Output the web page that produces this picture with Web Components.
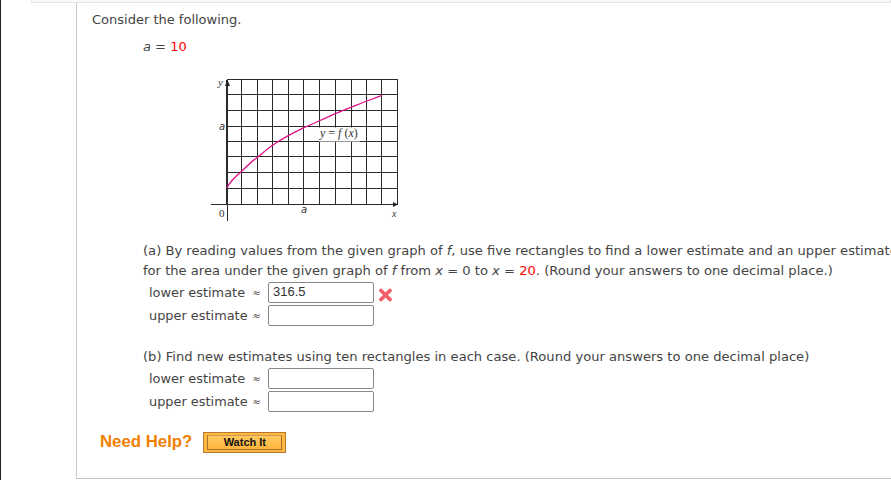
<!DOCTYPE html>
<html>
<head>
<meta charset="utf-8">
<title>Consider the following</title>
<style>
html, body { margin: 0; height: 480px; overflow: hidden; background: #fff; }
body { border-left: 1px solid #222; box-sizing: border-box; }
</style>
</head>
<body>
<question-panel>
  <problem-text>Consider the following.</problem-text>
  <given-value></given-value>
  <fn-graph></fn-graph>
  <part-block style="margin-top:20px">
    <span slot="text">(a) By reading values from the given graph of <i>f</i>, use five rectangles to find a lower estimate and an upper estimate<br>for the area under the given graph of <i>f</i> from <i>x</i> = 0 to <i>x</i> = <span style="color:#f00">20</span>. (Round your answers to one decimal place.)</span>
    <answer-row label="lower estimate" value="316.5" wrong></answer-row>
    <answer-row label="upper estimate"></answer-row>
  </part-block>
  <part-block style="margin-top:20px">
    <span slot="text">(b) Find new estimates using ten rectangles in each case. (Round your answers to one decimal place)</span>
    <answer-row label="lower estimate"></answer-row>
    <answer-row label="upper estimate"></answer-row>
  </part-block>
  <need-help></need-help>
</question-panel>

<script>
class QuestionPanel extends HTMLElement {
  constructor() {
    super();
    this.attachShadow({ mode: "open" });
    this.shadowRoot.innerHTML = `
<style>
:host { display: block; font: 13.1px/20px "DejaVu Sans", sans-serif; color: #444; }
.top { height: 3px; margin-left: 30px; background: #f8f8f8; border: 1px solid #e4e4e4; border-top: 0; box-sizing: border-box; }
.box {
  margin-left: 75px;
  height: 476px;
  box-sizing: border-box;
  border-left: 1px solid #ccc;
  border-bottom: 1px solid #c4c4c4;
  padding: 7px 0 0 15px;
  overflow: hidden;
  white-space: nowrap;
}
</style>
<div class="top"></div>
<div class="box"><slot></slot></div>`;
  }
}

class ProblemText extends HTMLElement {
  constructor() {
    super();
    this.attachShadow({ mode: "open" });
    this.shadowRoot.innerHTML = `<style>:host { display: block; font-size: 13px; }</style><slot></slot>`;
  }
}

class GivenValue extends HTMLElement {
  constructor() {
    super();
    this.attachShadow({ mode: "open" });
    this.shadowRoot.innerHTML = `
<style>
:host { display: block; margin: 7px 0 0 51px; font-size: 13px; }
span { color: #f00; }
</style>
<i>a</i> = <span>10</span>`;
  }
}

class FnGraph extends HTMLElement {
  constructor() {
    super();
    this.attachShadow({ mode: "open" });
    // grid lines read from the reference
    const xs = [227, 242, 258, 273, 289, 304, 320, 336, 352, 367, 382, 398];
    const ys = [79, 94, 110, 126, 141, 156, 172, 188, 204];
    let grid = "";
    xs.forEach((x) => { grid += `<path d="M${x - 200.5} 9V${ys[8] - 70}"/>`; });
    ys.forEach((y) => { grid += `<path d="M${xs[0] - 200} ${y - 70.5}H198"/>`; });
    this.shadowRoot.innerHTML = `
<style>
:host { display: block; margin: 14px 0 0 108px; height: 150px; }
svg { display: block; }
text { font-family: "Liberation Serif", serif; fill: #333; }
.a { font-family: "DejaVu Sans", sans-serif; }
</style>
<svg width="210" height="150" viewBox="0 0 210 150">
  <g stroke="#2a2a2a" stroke-width="1" fill="none">${grid}
    <path d="M11 133.500H197"/>
    <path d="M27.500 9V150"/>
  </g>
  <path d="M25 15l2.500-6 2.500 6zM193 131l5 2.500-5 2.500z" fill="#222"/>
  <path d="M27 116.700C31 109 36 105 42 100C47 95 52 90 58 86C63 82 68 77 73 74C83 67 93 62 104 56.700C115 52 125 47 136 42.300C146 38 157 34 167 30L182 24.300" fill="none" stroke="#e0108a" stroke-width="1.300"/>
  <rect x="119" y="56.500" width="41" height="14" fill="#fff"/>
  <text x="120" y="66" font-size="12"><tspan font-style="italic">y</tspan> = <tspan font-style="italic">f</tspan> (<tspan font-style="italic">x</tspan>)</text>
  <text x="18" y="15" font-size="11" font-style="italic">y</text>
  <text class="a" x="19" y="59" font-size="10" font-style="italic">a</text>
  <text class="a" x="101" y="142" font-size="10" font-style="italic">a</text>
  <text x="19" y="146" font-size="11">0</text>
  <text x="192" y="146" font-size="10" font-style="italic">x</text>
</svg>`;
  }
}

class PartBlock extends HTMLElement {
  constructor() {
    super();
    this.attachShadow({ mode: "open" });
    this.shadowRoot.innerHTML = `
<style>
:host { display: block; margin-left: 51px; }
.rows { display: flex; flex-direction: column; gap: 1px; padding: 1px 0 0 6px; }
</style>
<slot name="text"></slot>
<div class="rows"><slot></slot></div>`;
  }
}

class AnswerRow extends HTMLElement {
  constructor() {
    super();
    this.attachShadow({ mode: "open" });
    const value = this.getAttribute("value") || "";
    const wrong = this.hasAttribute("wrong");
    this.shadowRoot.innerHTML = `
<style>
:host { display: flex; align-items: center; height: 22px; }
.label { width: 119px; display: flex; justify-content: space-between; align-items: center; padding-right: 7px; box-sizing: border-box; font-size: 12.9px; }
.approx { font-size: 10px; }
.input {
  width: 106px; height: 21px; margin-top: -1px; box-sizing: border-box;
  border: 1px solid #888; border-radius: 2px;
  font: 13px/17px "Liberation Sans", sans-serif; color: #333; padding-left: 4px;
}
svg { margin: 3px 0 0 4px; }
</style>
<span class="label"><span>${this.getAttribute("label")}</span><span class="approx">≈</span></span>
<span class="input">${value}</span>
${wrong ? `<svg width="15" height="14" viewBox="0 0 15 14"><path d="M3 2.500l9 9M12 2.500l-9 9" stroke="#f0606a" stroke-width="3.800" stroke-linecap="round"/></svg>` : ""}`;
  }
}

class NeedHelp extends HTMLElement {
  constructor() {
    super();
    this.attachShadow({ mode: "open" });
    this.shadowRoot.innerHTML = `
<style>
:host { display: flex; align-items: center; margin: 18px 0 0 8px; font-family: "Liberation Sans", sans-serif; }
.t { color: #f08000; font-size: 16.800px; font-weight: bold; line-height: 22px; }
.btn {
  margin-left: 11px; width: 83px; height: 21px; box-sizing: border-box;
  border: 1px solid #b87a30; background: #ffb840; padding: 2px 3px;
}
.btn span {
  display: block; height: 100%; box-sizing: border-box;
  border: 1px solid #a87028; border-top-color: #d09a50;
  background: linear-gradient(#ffc860, #ffb53c);
  color: #111; font-size: 11px; font-weight: bold; line-height: 13px; text-align: center;
}
</style>
<span class="t">Need Help?</span>
<span class="btn"><span>Watch It</span></span>`;
  }
}

customElements.define("question-panel", QuestionPanel);
customElements.define("problem-text", ProblemText);
customElements.define("given-value", GivenValue);
customElements.define("fn-graph", FnGraph);
customElements.define("part-block", PartBlock);
customElements.define("answer-row", AnswerRow);
customElements.define("need-help", NeedHelp);
</script>
</body>
</html>
